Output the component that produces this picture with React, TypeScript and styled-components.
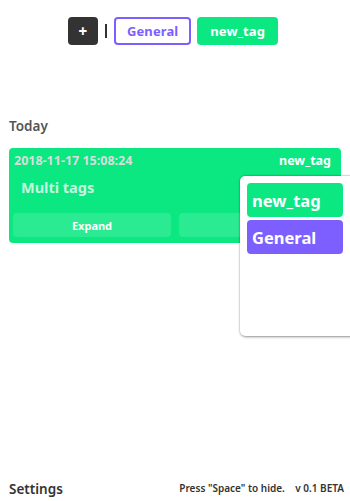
import React from "react";
import styled, { createGlobalStyle } from "styled-components";

const Global = createGlobalStyle`
  html, body { margin: 0; padding: 0; background: #fff; }
  body { font-family: "Noto Sans", "Open Sans", sans-serif; }
  * { box-sizing: border-box; }
`;

const GREEN = "#0be881";
const PURPLE = "#7d5fff";

const Page = styled.div`
  position: relative;
  width: 350px;
  height: 501px;
  overflow: hidden;
  display: flex;
  flex-direction: column;
`;

const Header = styled.div`
  display: flex;
  justify-content: center;
  align-items: center;
  gap: 6px;
  margin-top: 17px;
  padding-right: 4px;
`;

const PlusButton = styled.div`
  width: 30px;
  height: 28px;
  border-radius: 4px;
  background: #333;
  color: #fff;
  display: flex;
  align-items: center;
  justify-content: center;
  font-size: 15px;
  font-weight: 800;
`;

const Divider = styled.div`
  width: 2px;
  height: 14px;
  background: #333;
  margin: 0 1px;
`;

const TagButton = styled.div<{ $color: string; $outline?: boolean }>`
  height: 28px;
  padding: 0 11px;
  border-radius: 4px;
  border: 2px solid ${(p) => p.$color};
  background: ${(p) => (p.$outline ? "#fff" : p.$color)};
  color: ${(p) => (p.$outline ? p.$color : "#fff")};
  display: flex;
  align-items: center;
  font-size: 13px;
  font-weight: 700;
  letter-spacing: 0.1px;
`;

const SectionTitle = styled.div`
  margin: 72px 0 0 9px;
  font-size: 13.5px;
  font-weight: 600;
  color: #555;
  line-height: 18px;
`;

const Card = styled.div`
  margin: 13px 9px 0 9px;
  height: 95px;
  border-radius: 4px;
  background: ${GREEN};
  display: flex;
  flex-direction: column;
  padding: 3px 10px 6px 4px;
`;

const CardTop = styled.div`
  display: flex;
  justify-content: space-between;
  align-items: center;
  height: 18px;
  font-size: 12.5px;
  font-weight: 700;
`;

const DateText = styled.span`
  color: #dcdcdc;
  padding-left: 1px;
`;

const CardTag = styled.span`
  color: #fff;
`;

const CardTitle = styled.div`
  margin: 8px 0 0 8px;
  font-size: 14.5px;
  font-weight: 700;
  color: #c6f7df;
  line-height: 20px;
`;

const Actions = styled.div`
  margin-top: auto;
  display: grid;
  grid-template-columns: 1fr 1fr;
  gap: 8px;
  margin-right: -6px;
`;

const ActionButton = styled.div`
  height: 24px;
  border-radius: 4px;
  background: rgba(255, 255, 255, 0.13);
  color: #fff;
  font-size: 11px;
  font-weight: 700;
  display: flex;
  align-items: center;
  justify-content: center;
`;

const Popup = styled.div`
  position: absolute;
  left: 240px;
  top: 176px;
  width: 130px;
  height: 160px;
  background: #fff;
  border-radius: 5px;
  box-shadow: 0 0 2px rgba(0, 0, 0, 0.4), 1px 1px 3px rgba(0, 0, 0, 0.35);
  padding: 7px;
  display: flex;
  flex-direction: column;
  gap: 3px;
`;

const PopupItem = styled.div<{ $color: string }>`
  width: 96px;
  height: 34px;
  border-radius: 4px;
  background: ${(p) => p.$color};
  color: #fff;
  font-size: 16.5px;
  font-weight: 700;
  display: flex;
  align-items: center;
  padding-left: 5px;
`;

const Footer = styled.div`
  margin-top: auto;
  height: 26px;
  display: flex;
  justify-content: space-between;
  align-items: center;
  padding: 0 6px 0 9px;
`;

const SettingsText = styled.span`
  font-size: 13.5px;
  font-weight: 600;
  color: #333;
  margin-top: 1px;
`;

const Hint = styled.span`
  font-size: 10px;
  font-weight: 600;
  color: #333;
`;

export default function App() {
  return (
    <>
      <Global />
      <Page>
        <Header>
          <PlusButton>+</PlusButton>
          <Divider />
          <TagButton $color={PURPLE} $outline>
            General
          </TagButton>
          <TagButton $color={GREEN}>new_tag</TagButton>
        </Header>
        <SectionTitle>Today</SectionTitle>
        <Card>
          <CardTop>
            <DateText>2018-11-17 15:08:24</DateText>
            <CardTag>new_tag</CardTag>
          </CardTop>
          <CardTitle>Multi tags</CardTitle>
          <Actions>
            <ActionButton>Expand</ActionButton>
            <ActionButton />
          </Actions>
        </Card>
        <Footer>
          <SettingsText>Settings</SettingsText>
          <Hint>Press "Space" to hide.&nbsp;&nbsp;&nbsp; v 0.1 BETA</Hint>
        </Footer>
        <Popup>
          <PopupItem $color={GREEN}>new_tag</PopupItem>
          <PopupItem $color={PURPLE}>General</PopupItem>
        </Popup>
      </Page>
    </>
  );
}
